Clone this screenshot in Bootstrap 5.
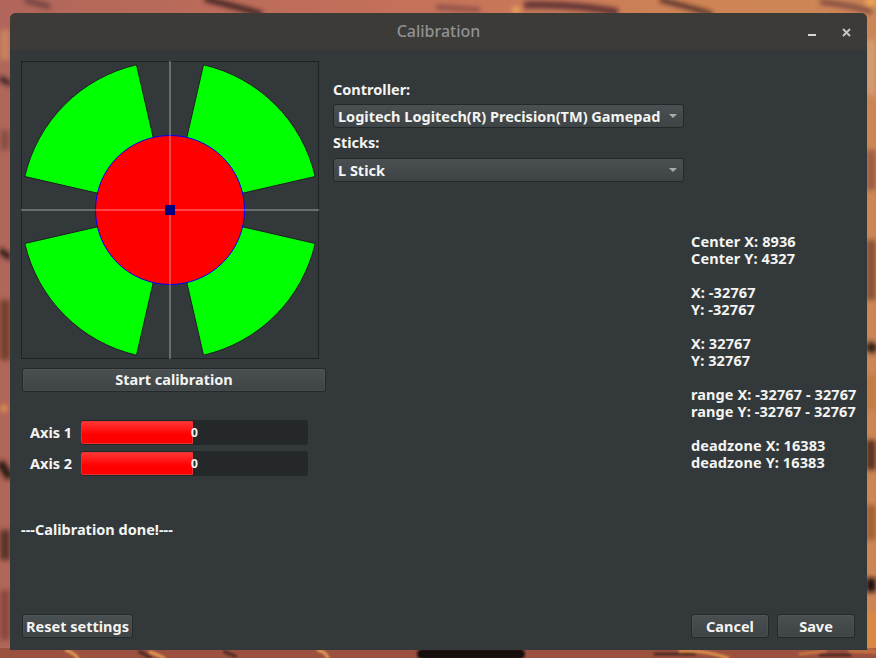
<!DOCTYPE html>
<html lang="en">
<head>
<meta charset="utf-8">
<title>Calibration</title>
<link href="https://cdn.jsdelivr.net/npm/bootstrap@5.3.0/dist/css/bootstrap.min.css" rel="stylesheet">
<style>
html, body { height: 100%; margin: 0; overflow: hidden; }
body {
  background: #a8643f;
  font-family: "Noto Sans", "DejaVu Sans", sans-serif;
  font-weight: 700;
  font-size: 14.5px;
  line-height: 17px;
  color: #f4f4f2;
}
.desk { width: 876px; height: 658px; padding: 13px 9px 8px 10px; position: relative; }
.wall { position: absolute; inset: 0; width: 876px; height: 658px; }
.win { position: relative; width: 857px; height: 637px; background: #33393b; border-radius: 6px 6px 0 0; }
.ttl { height: 37px; background: #3d3b38; border-radius: 6px 6px 0 0; color: #8f9294; font-size: 16px; font-weight: 500; position: relative; }
.ttl-btns { position: absolute; right: 16px; top: 13px; gap: 26px; }
.main { height: 600px; padding: 11px 12px 12px 11px; }
.lcol { width: 305px; }
.mcol { width: 351px; margin-left: 7px; padding-top: 20px; }
.rcol { margin-left: 7px; padding-top: 172px; white-space: nowrap; letter-spacing: .1px; }
.stats { margin-bottom: 17px; }
.gbtn {
  background: linear-gradient(#4a4f51, #3e4345);
  border: 1px solid #23282a;
  box-shadow: inset 0 0 0 1px rgba(255,255,255,.04);
  border-radius: 3px;
  color: #f4f4f2;
  font-weight: 700;
  font-size: 14.5px;
  line-height: 17px;
  padding: 1px 4px;
  height: 24px;
}
.gbtn:hover, .gbtn:active { background: linear-gradient(#4a4f51, #3e4345); color: #f4f4f2; border-color: #23282a; }
.gsel {
  width: 351px; height: 24px;
  color: #f4f4f2;
  background-color: #43484a;
  background-image: url("data:image/svg+xml,%3Csvg xmlns='http://www.w3.org/2000/svg' width='8' height='4'%3E%3Cpath d='M0 0h8L4 4z' fill='%23a9abab'/%3E%3C/svg%3E"), linear-gradient(#4a4f51, #3e4345);
  background-repeat: no-repeat;
  background-position: right 6px center, 0 0;
  background-size: 8px 4px, 100% 100%;
  border: 1px solid #23282a;
  border-radius: 3px;
  font-weight: 700; font-size: 14.5px; line-height: 17px;
  padding: 2px 20px 2px 4px;
}
.lbl { margin: 0; display: block; line-height: 17px; font-weight: 700; }
.lbl-c { margin-bottom: 6px; }
.lbl-s { margin-bottom: 7px; }
.sel-gap { margin-bottom: 6px; }
.canvasbox { width: 298px; height: 298px; display: block; }
.start { width: 304px; margin-top: 9px; margin-left: 1px; display: block; padding: 0 4px 2px; }
.axes { margin-top: 28px; padding-left: 9px; width: 287px; gap: 6px; }
.axl { width: 51px; }
.pg { position: relative; width: 227px; height: 25px; background: #25282a; border-radius: 3px; overflow: visible; }
.pgb { width: 112px; margin: 1px 0; background: linear-gradient(#ff3535, #ff0000 60%); border: 1px solid #e43333; border-radius: 2px 0 0 2px; overflow: visible; }
.pgv { position: absolute; left: 0; width: 227px; top: 4px; text-align: center; color: #f4f4f2; }
.done { margin-top: 45px; }
.foot { gap: 8px; margin-top: auto; padding-left: 1px; }
.bcancel, .bsave { width: 78px; }
.breset { width: 111px; padding: 1px 0; }
</style>
</head>
<body>
<div class="desk">
  <svg class="wall" viewBox="0 0 876 658" xmlns="http://www.w3.org/2000/svg">
    <defs>
      <linearGradient id="wg" x1="0" x2="1" y1="0" y2="0">
        <stop offset="0" stop-color="#b0665a"/><stop offset=".45" stop-color="#c4705a"/><stop offset=".8" stop-color="#cf8456"/><stop offset="1" stop-color="#cc8656"/>
      </linearGradient>
      <filter id="wb" filterUnits="userSpaceOnUse" x="-20" y="-20" width="916" height="698"><feGaussianBlur stdDeviation="2.4"/></filter>
      <filter id="wb2" filterUnits="userSpaceOnUse" x="-20" y="630" width="916" height="48"><feGaussianBlur stdDeviation="1"/></filter>
    </defs>
    <rect width="876" height="658" fill="url(#wg)"/>
    <rect y="648" width="876" height="10" fill="#9c5140"/>
    <g fill="none" stroke-linecap="butt" filter="url(#wb)">
      <path d="M25 0L50 7" stroke="#6d3f40" stroke-width="5"/>
      <path d="M205 -1C225 4 245 9 262 14" stroke="#351a1e" stroke-width="5"/>
      <path d="M436 7L480 10" stroke="#8c4f4a" stroke-width="5"/>
      <path d="M524 5C560 4 590 7 618 12" stroke="#5e3034" stroke-width="7"/>
      <path d="M660 0C680 5 700 10 712 14" stroke="#3d2020" stroke-width="4"/>
      <path d="M820 2C840 4 860 8 872 12" stroke="#7c463f" stroke-width="5"/>
      <path d="M516 7L516 13" stroke="#f0a85c" stroke-width="7"/>
      <path d="M866 1L876 3" stroke="#f5ac55" stroke-width="6"/>
      <path d="M0 78L10 84" stroke="#2e1a1c" stroke-width="5"/>
      <path d="M5 30V60" stroke="#c88260" stroke-width="10"/>
      <path d="M5 130V150" stroke="#8a4f44" stroke-width="10"/>
      <path d="M0 250L10 258" stroke="#2a1714" stroke-width="6"/>
      <path d="M5 300V360" stroke="#75402f" stroke-width="10"/>
      <path d="M4 405V412" stroke="#e89a4e" stroke-width="5"/>
      <path d="M0 462L10 478" stroke="#27140f" stroke-width="8"/>
      <path d="M5 530V560" stroke="#5b3028" stroke-width="10"/>
      <path d="M5 590V640" stroke="#8a4a3e" stroke-width="10"/>
      <path d="M871 40V95" stroke="#d49e72" stroke-width="9"/>
      <path d="M871 150V190" stroke="#9b5e42" stroke-width="10"/>
      <path d="M871 240V300" stroke="#8a5238" stroke-width="10"/>
      <path d="M867 345L876 350" stroke="#2e1a12" stroke-width="10"/>
      <path d="M871 375V410" stroke="#c47a42" stroke-width="10"/>
      <path d="M871 440V470" stroke="#5a3220" stroke-width="10"/>
      <path d="M871 505V540" stroke="#a36136" stroke-width="10"/>
      <path d="M871 578V592" stroke="#1f110c" stroke-width="10"/>
      <path d="M871 612V648" stroke="#dd8a3e" stroke-width="9"/>
    </g>
    <g fill="none" stroke-linecap="round" filter="url(#wb2)">
      <path d="M66 650C72 652 75 655 78 658M150 652C156 654 160 656 164 658M318 650C325 652 327 655 328 658" stroke="#e69a55" stroke-width="3"/>
      <path d="M140 652L150 657M225 652L235 656" stroke="#5a2e28" stroke-width="4"/>
      <path d="M422 654L520 654" stroke="#150b09" stroke-width="10"/>
      <path d="M655 654L695 654M820 655L850 655" stroke="#4d2820" stroke-width="3"/>
      <path d="M680 651C695 650 710 652 728 658" stroke="#e0924c" stroke-width="3"/>
      <path d="M800 654L825 651M850 651L876 652" stroke="#c87744" stroke-width="3"/>
    </g>
  </svg>
  <div class="win d-flex flex-column">
    <div class="ttl d-flex align-items-center justify-content-center">
      <span>Calibration</span>
      <div class="ttl-btns d-flex align-items-center">
        <svg width="8" height="12" viewBox="0 0 8 12"><rect y="8" width="8" height="2" fill="#d6d6d4"/></svg>
        <svg width="9" height="9" viewBox="0 0 9 9"><path d="M1 1l7 7M8 1L1 8" stroke="#c4c4c2" stroke-width="2"/></svg>
      </div>
    </div>
    <div class="main d-flex flex-column">
      <div class="d-flex flex-grow-1">
        <div class="lcol">
          <svg class="canvasbox" viewBox="0 0 298 298" xmlns="http://www.w3.org/2000/svg">
            <rect x=".5" y=".5" width="297" height="297" fill="none" stroke="#1f2324"/>
            <g transform="translate(149 149)" fill="#00ff00" stroke="#1c2020" stroke-width="1">
              <path d="M-16.9 -73 L-33.5 -145.2 A149 149 0 0 0 -145.2 -33.5 L-73 -16.9 Z"/>
              <path d="M16.9 -73 L33.5 -145.2 A149 149 0 0 1 145.2 -33.5 L73 -16.9 Z"/>
              <path d="M-16.9 73 L-33.5 145.2 A149 149 0 0 1 -145.2 33.5 L-73 16.9 Z"/>
              <path d="M16.9 73 L33.5 145.2 A149 149 0 0 0 145.2 33.5 L73 16.9 Z"/>
              <circle r="74.5" fill="#ff0000" stroke="#0000ff"/>
            </g>
            <path d="M149 0V298M0 149H298" stroke="#fff" stroke-opacity=".35" stroke-width="1.5"/>
            <rect x="144" y="144" width="10" height="10" fill="#000080"/>
          </svg>
          <button type="button" class="btn gbtn start">Start calibration</button>
          <div class="axes d-flex flex-column">
            <div class="d-flex align-items-center">
              <span class="axl">Axis 1</span>
              <div class="progress pg"><div class="progress-bar pgb"></div><span class="pgv">0</span></div>
            </div>
            <div class="d-flex align-items-center">
              <span class="axl">Axis 2</span>
              <div class="progress pg"><div class="progress-bar pgb"></div><span class="pgv">0</span></div>
            </div>
          </div>
          <div class="done">---Calibration done!---</div>
        </div>
        <div class="mcol">
          <label class="lbl lbl-c" for="c1">Controller:</label>
          <select id="c1" class="form-select gsel sel-gap"><option>Logitech Logitech(R) Precision(TM) Gamepad</option></select>
          <label class="lbl lbl-s" for="c2">Sticks:</label>
          <select id="c2" class="form-select gsel"><option>L Stick</option></select>
        </div>
        <div class="rcol">
          <div class="stats">Center X: 8936<br>Center Y: 4327</div>
          <div class="stats">X: -32767<br>Y: -32767</div>
          <div class="stats">X: 32767<br>Y: 32767</div>
          <div class="stats">range X: -32767 - 32767<br>range Y: -32767 - 32767</div>
          <div class="stats">deadzone X: 16383<br>deadzone Y: 16383</div>
        </div>
      </div>
      <div class="d-flex foot">
        <button type="button" class="btn gbtn breset me-auto">Reset settings</button>
        <button type="button" class="btn gbtn bcancel">Cancel</button>
        <button type="button" class="btn gbtn bsave">Save</button>
      </div>
    </div>
  </div>
</div>
<script src="https://cdn.jsdelivr.net/npm/bootstrap@5.3.0/dist/js/bootstrap.bundle.min.js"></script>
</body>
</html>
